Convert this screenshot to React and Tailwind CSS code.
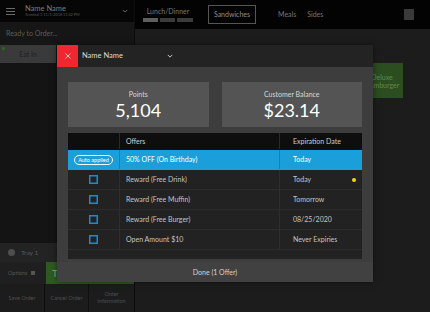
import React from 'react';

const offers = [
    { name: '50% OFF (On Birthday)', expires: 'Today', applied: true },
    { name: 'Reward (Free Drink)', expires: 'Today', dot: true },
    { name: 'Reward (Free Muffin)', expires: 'Tomorrow' },
    { name: 'Reward (Free Burger)', expires: '08/25/2020' },
    { name: 'Open Amount $10', expires: 'Never Expiries' },
];

const Chevron = ({ className }) => (
    <svg viewBox="0 0 8 5" className={className} fill="none" stroke="currentColor" strokeWidth="1.3">
        <path d="M1 1l3 3 3-3" />
    </svg>
);

const OfferRow = ({ offer }) => {
    const bg = offer.applied ? 'bg-[#1b9fdb]' : 'bg-[#222222]';
    const divide = offer.applied ? 'border-[#1580b3]' : 'border-[#2e2e2e]';
    return (
        <div className={`flex h-[20px] border-b ${offer.applied ? 'border-[#1b9fdb]' : 'border-[#2c2c2c]'} ${bg}`}>
            <div className={`w-[52px] flex items-center justify-center border-r ${divide}`}>
                {offer.applied ? (
                    <span className="h-[10px] px-[3px] rounded-full border border-white text-white text-[5.5px] leading-[8px]">Auto applied</span>
                ) : (
                    <svg viewBox="0 0 9 9" className="w-[9px] h-[9px]">
                        <rect x="0.75" y="0.75" width="7.5" height="7.5" fill="none" stroke="#1b8ccb" strokeWidth="1.5" />
                    </svg>
                )}
            </div>
            <div className={`flex-1 flex items-center pl-[6px] border-r ${divide} ${offer.applied ? 'text-white' : 'text-[#c4c4c4]'}`}>
                {offer.name}
            </div>
            <div className={`w-[82px] flex items-center pl-[13px] pr-[6px] ${offer.applied ? 'text-white' : 'text-[#c4c4c4]'}`}>
                <span className="flex-1">{offer.expires}</span>
                {offer.dot && <span className="w-[4px] h-[4px] rounded-full bg-[#f2d600]" />}
            </div>
        </div>
    );
};

export default function App() {
    return (
        <div className="relative w-[430px] h-[312px] overflow-hidden flex bg-[#1c1c1c] font-['Lato',sans-serif]">
            {/* left order panel (dimmed) */}
            <div className="w-[135px] flex flex-col bg-[#141414] border-r border-[#0c0c0c]">
                <div className="h-[22px] bg-[#060606] flex items-center pl-[6px] pr-[6px]">
                    <svg viewBox="0 0 9 7" className="w-[9px] h-[7px] text-[#6a6a6a]" stroke="currentColor" strokeWidth="1">
                        <path d="M0 0.5h9M0 3.5h9M0 6.5h9" />
                    </svg>
                    <div className="ml-[10px] flex-1 leading-none">
                        <div className="text-[7.5px] text-[#7c7c7c]">Name Name</div>
                        <div className="text-[3.8px] text-[#5a5a5a] mt-[1px]">Terminal 1 11/1/2018 11:52 PM</div>
                    </div>
                    <Chevron className="w-[6px] h-[4px] text-[#6a6a6a]" />
                </div>
                <div className="h-[23px] bg-[#161616] flex items-center pl-[6px] text-[7px] text-[#5c5c5c]">Ready to Order...</div>
                <div className="h-[18px] flex">
                    <div className="relative w-[56px] bg-[#3a3a3a] flex items-center justify-center text-[7px] text-[#1e1e1e]">
                        <span className="absolute left-[2px] top-[2px] w-[3px] h-[3px] rounded-full bg-[#2c6a22]" />
                        Eat In
                    </div>
                </div>
                <div className="flex-1" />
                <div className="h-[19px] bg-[#232323] flex items-center pl-[8px] text-[6.5px] text-[#585858]">
                    <span className="w-[7px] h-[7px] rounded-full bg-[#4e4e4e] mr-[6px]" />
                    Tray 1
                </div>
                <div className="h-[22px] bg-[#1f1f1f] flex">
                    <div className="w-[46px] flex items-center pl-[8px] text-[5.5px] text-[#555]">
                        Options
                        <span className="ml-[4px] w-[4px] h-[4px] bg-[#555]" />
                    </div>
                    <div className="flex-1 bg-[#2e5a21] flex items-center pl-[6px] text-[10px] text-[#8ca882]">Total</div>
                </div>
                <div className="h-[28px] flex text-[5.5px] text-[#4f4f4f] text-center leading-[7px]">
                    <div className="w-[45px] flex items-center justify-center bg-[#1c1c1c] border-r border-[#0f0f0f]">Save Order</div>
                    <div className="w-[44px] flex items-center justify-center bg-[#1c1c1c] border-r border-[#0f0f0f]">Cancel Order</div>
                    <div className="flex-1 flex items-center justify-center bg-[#1c1c1c]">Order<br />Information</div>
                </div>
            </div>

            {/* right menu area (dimmed) */}
            <div className="flex-1 flex flex-col">
                <div className="h-[29px] bg-[#030303] flex items-center pl-[8px] pr-[16px]">
                    <div className="w-[50px] flex flex-col items-center">
                        <span className="text-[7px] text-[#767676] leading-none">Lunch/Dinner</span>
                        <div className="flex gap-[2px] mt-[3px]">
                            <span className="w-[15px] h-[4px] bg-[#5e5e5e]" />
                            <span className="w-[15px] h-[4px] bg-[#3b3b3b]" />
                            <span className="w-[16px] h-[4px] bg-[#3b3b3b]" />
                        </div>
                    </div>
                    <div className="ml-[15px] w-[48px] h-[19px] border border-[#555] flex items-center justify-center text-[7px] text-[#8e8e8e]">Sandwiches</div>
                    <span className="ml-[22px] text-[7px] text-[#767676]">Meals</span>
                    <span className="ml-[11px] text-[7px] text-[#767676]">Sides</span>
                    <span className="ml-auto w-[10px] h-[11px] bg-[#3a3a3a]" />
                </div>
                <div className="flex-1 flex justify-end pt-[34px] pr-[27px]">
                    <div className="w-[42px] h-[35px] bg-[#2b4d1f] flex items-center justify-center text-center text-[7px] leading-[8px] text-[#5f8b4f]">
                        Deluxe<br />Hamburger
                    </div>
                </div>
            </div>

            {/* customer offers modal */}
            <div className="absolute left-[57px] top-[45px] w-[316px] h-[237px] flex flex-col bg-[#3d3d3d] shadow-[0_0_6px_rgba(0,0,0,0.5)]">
                <div className="h-[22px] flex items-center bg-[#232323]">
                    <div className="w-[21px] h-full bg-[#ee282e] flex items-center justify-center">
                        <svg viewBox="0 0 6 6" className="w-[6px] h-[6px]" stroke="#fbd0d0" strokeWidth="0.9">
                            <path d="M0.5 0.5l5 5M5.5 0.5l-5 5" />
                        </svg>
                    </div>
                    <span className="ml-[4px] text-[7.5px] text-[#dcdcdc]">Name Name</span>
                    <Chevron className="ml-[44px] w-[6px] h-[4px] text-[#cfcfcf]" />
                </div>
                <div className="flex-1 px-[11px] pt-[15px]">
                    <div className="flex gap-[13px]">
                        <div className="flex-1 h-[45px] bg-[#545454] flex flex-col items-center justify-center">
                            <span className="text-[7px] text-[#d8d8d8] leading-none">Points</span>
                            <span className="text-[18px] text-white leading-none mt-[3px]">5,104</span>
                        </div>
                        <div className="flex-1 h-[45px] bg-[#545454] flex flex-col items-center justify-center">
                            <span className="text-[7px] text-[#d8d8d8] leading-none">Customer Balance</span>
                            <span className="text-[18px] text-white leading-none mt-[3px]">$23.14</span>
                        </div>
                    </div>
                    <div className="mt-[6px] h-[126px] bg-[#222222] text-[7px]">
                        <div className="flex h-[17px] bg-[#0e0e0e] text-[#cfcfcf] border-b border-[#0e0e0e]">
                            <div className="w-[52px] border-r border-[#2a2a2a]" />
                            <div className="flex-1 flex items-center pl-[6px] border-r border-[#2a2a2a]">Offers</div>
                            <div className="w-[82px] flex items-center pl-[13px]">Expiration Date</div>
                        </div>
                        {offers.map((offer) => (
                            <OfferRow key={offer.name} offer={offer} />
                        ))}
                    </div>
                </div>
                <div className="h-[20px] flex items-center justify-center text-[7px] text-[#d4d4d4] bg-[#414141]">Done (1 Offer)</div>
            </div>
        </div>
    );
}
